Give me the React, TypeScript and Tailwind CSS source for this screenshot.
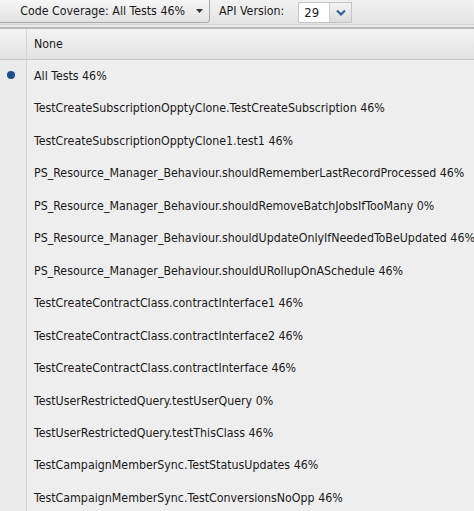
import React from "react";

const rows: { label: string; selected?: boolean }[] = [
  { label: "All Tests 46%", selected: true },
  { label: "TestCreateSubscriptionOpptyClone.TestCreateSubscription 46%" },
  { label: "TestCreateSubscriptionOpptyClone1.test1 46%" },
  { label: "PS_Resource_Manager_Behaviour.shouldRememberLastRecordProcessed 46%" },
  { label: "PS_Resource_Manager_Behaviour.shouldRemoveBatchJobsIfTooMany 0%" },
  { label: "PS_Resource_Manager_Behaviour.shouldUpdateOnlyIfNeededToBeUpdated 46%" },
  { label: "PS_Resource_Manager_Behaviour.shouldURollupOnASchedule 46%" },
  { label: "TestCreateContractClass.contractInterface1 46%" },
  { label: "TestCreateContractClass.contractInterface2 46%" },
  { label: "TestCreateContractClass.contractInterface 46%" },
  { label: "TestUserRestrictedQuery.testUserQuery 0%" },
  { label: "TestUserRestrictedQuery.testThisClass 46%" },
  { label: "TestCampaignMemberSync.TestStatusUpdates 46%" },
  { label: "TestCampaignMemberSync.TestConversionsNoOpp 46%" },
];

export default function App() {
  return (
    <div
      className="w-[474px] h-[511px] overflow-hidden bg-[#eeeeee] text-[#1a1a1a]"
      style={{ fontFamily: '"DejaVu Sans Condensed", "DejaVu Sans", sans-serif' }}
    >
      {/* toolbar */}
      <div className="h-[25px] flex items-start bg-gradient-to-b from-[#f1f1f1] to-[#e4e4e4] border-b border-[#d4d4d4]">
        <div className="h-[23px] w-[210px] flex items-center justify-end pr-[6px] border-r border-b border-[#a9a9a9] rounded-br-[4px] bg-gradient-to-b from-[#f6f6f6] to-[#e2e2e2] text-[12.3px]">
          <span>Code Coverage: All Tests 46%</span>
          <svg width="7" height="4" viewBox="0 0 7 4" className="ml-[11px]">
            <path d="M0 0 L7 0 L3.5 4 Z" fill="#333" />
          </svg>
        </div>
        <div className="h-[23px] flex items-center ml-[9px] text-[12.3px]">API Version:</div>
        <div className="ml-[14px] mt-[2px] h-[21px] flex border border-[#c4c4c4]">
          <div className="w-[30px] bg-white flex items-center pl-[5px] text-[13px]">29</div>
          <div className="w-[22px] flex items-center justify-center bg-gradient-to-b from-[#f4f4f4] to-[#dcdcdc] border-l border-[#cfcfcf]">
            <svg width="10" height="7" viewBox="0 0 10 7">
              <path d="M1 1.5 L5 5.5 L9 1.5" stroke="#2f5f9e" strokeWidth="2.2" fill="none" />
            </svg>
          </div>
        </div>
      </div>
      <div className="h-[2px] bg-[#e9e9e9]" />
      <div className="h-[2px] bg-[#b9b9b9]" />

      {/* menu */}
      <div className="flex">
        <div className="w-[26px] shrink-0 flex flex-col">
          <div className="h-[31px] bg-gradient-to-b from-[#f3f3f3] to-[#e2e2e2] border-b border-[#c6c6c6]" />
          <div className="flex-1 bg-[#ebebeb]">
            {rows.map((r, i) => (
              <div key={i} className="h-[32.46px] flex items-center justify-center">
                {r.selected && <div className="w-[8px] h-[8px] rounded-full bg-[#1f4f8e] -ml-[4px] -mt-[2px]" />}
              </div>
            ))}
          </div>
        </div>
        <div className="w-[1px] bg-[#d6d6d6]" />
        <div className="flex-1 flex flex-col min-w-0">
          <div className="h-[31px] flex items-center pl-[7px] text-[12.3px] bg-gradient-to-b from-[#f3f3f3] to-[#e2e2e2] border-b border-[#c6c6c6]">
            None
          </div>
          {rows.map((r, i) => (
            <div key={i} className="h-[32.46px] flex items-center pl-[7px] text-[12.3px] whitespace-nowrap">
              {r.label}
            </div>
          ))}
        </div>
      </div>
    </div>
  );
}
